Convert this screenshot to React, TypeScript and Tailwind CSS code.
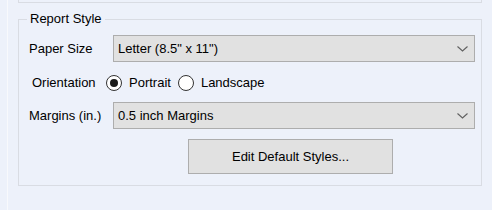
const font = { fontFamily: '"Liberation Sans", Arial, sans-serif' };

const Chevron = () => (
  <svg width="11" height="6" viewBox="0 0 11 6" className="shrink-0">
    <path d="M0.5 0.5 L5.5 5 L10.5 0.5" fill="none" stroke="#606060" strokeWidth="1.1" />
  </svg>
);

const Combo = ({ value }: { value: string }) => (
  <div className="flex h-[27px] flex-1 items-center justify-between border border-[#adadad] bg-[#e1e1e1] pl-[4px] pr-[6px]">
    <span>{value}</span>
    <Chevron />
  </div>
);

const Radio = ({ checked, label }: { checked: boolean; label: string }) => (
  <label className="flex items-center">
    <span className="flex h-[16px] w-[16px] items-center justify-center rounded-full border border-[#333333] bg-white">
      {checked && <span className="h-[8px] w-[8px] rounded-full bg-[#1a1a1a]" />}
    </span>
    <span className="ml-[7px]">{label}</span>
  </label>
);

export default function App() {
  return (
    <div
      className="flex h-[210px] w-[492px] bg-[#edf1fa] text-[13px] leading-[16px] text-[#000000]"
      style={font}
    >
      <div className="w-[7px]" />
      <div className="flex flex-1 flex-col border-l border-[#f8f9fc] pl-[10px] pr-[10px]">
        {/* bottom of the group above */}
        <div className="h-[3px] border-x border-b border-[#d9dce3]" />

        <div className="relative mt-[16px] flex h-[167px] flex-col border border-[#d9dce3] pl-[10px] pr-[6px] pt-[15px]">
          <span className="absolute left-[8px] top-[-9px] bg-[#edf1fa] px-[3px]">Report Style</span>

          <div className="flex items-center">
            <span className="w-[84px]">Paper Size</span>
            <Combo value={'Letter (8.5" x 11")'} />
          </div>

          <div className="mt-[11px] flex h-[20px] items-center">
            <span className="w-[77px] pl-[3px]">Orientation</span>
            <div className="flex items-center gap-[7px]">
              <Radio checked label="Portrait" />
              <Radio checked={false} label="Landscape" />
            </div>
          </div>

          <div className="mt-[9px] flex items-center">
            <span className="w-[84px]">Margins (in.)</span>
            <Combo value="0.5 inch Margins" />
          </div>

          <div className="mt-[10px] flex">
            <button className="ml-[159px] h-[35px] w-[205px] border border-[#adadad] bg-[#e1e1e1]">
              Edit Default Styles...
            </button>
          </div>
        </div>
      </div>
    </div>
  );
}
